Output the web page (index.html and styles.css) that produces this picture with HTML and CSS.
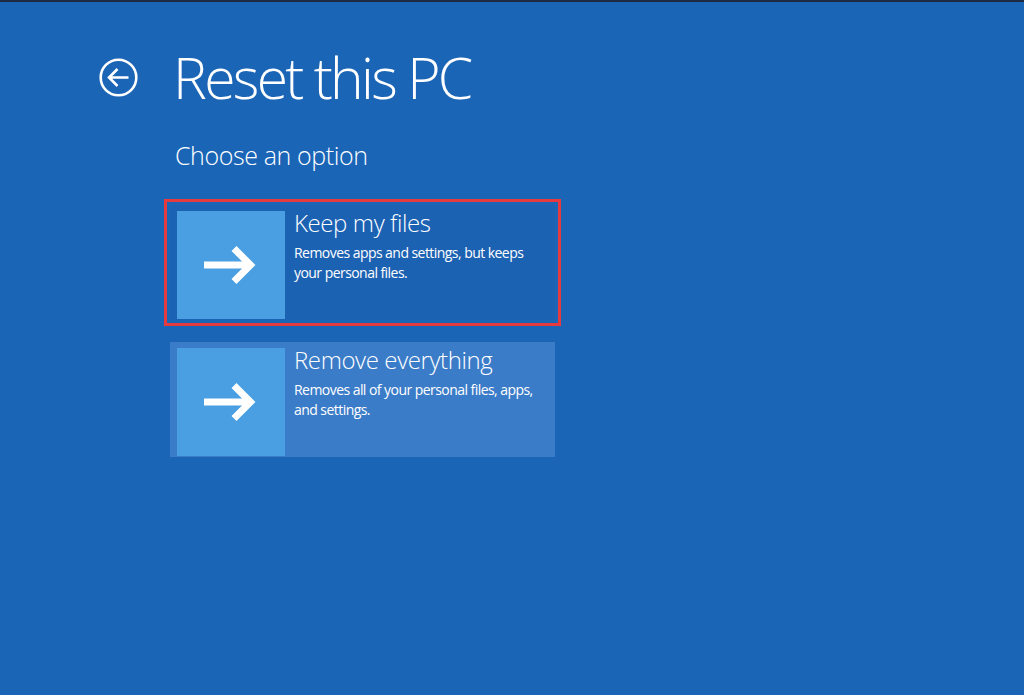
FILE: index.html
```html
<!DOCTYPE html>
<html lang="en">
<head>
    <meta charset="UTF-8">
    <meta name="viewport" content="width=device-width, initial-scale=1.0">
    <title>Reset this PC</title>
    <link rel="stylesheet" href="styles.css">
</head>
<body>
    <div class="screen">
        <div class="header">
            <button class="back" aria-label="Back">
                <svg width="39" height="39" viewBox="0 0 39 39">
                    <circle cx="19.5" cy="19.5" r="17.8" fill="none" stroke="#fff" stroke-width="2.6"/>
                    <path d="M10 19.5 H29.5 M18.5 11 L10 19.5 L18.5 28" fill="none" stroke="#fff" stroke-width="2.6" stroke-linejoin="miter"/>
                </svg>
            </button>
            <h1>Reset this PC</h1>
        </div>
        <h2 class="subtitle">Choose an option</h2>

        <div class="options">
            <div class="option selected">
                <div class="tile">
                    <svg width="52" height="40" viewBox="0 0 52 40">
                        <path d="M0 20 H46 M30 3.5 L46.5 20 L30 36.5" fill="none" stroke="#fff" stroke-width="7"/>
                    </svg>
                </div>
                <div class="text">
                    <div class="name">Keep my files</div>
                    <p class="desc">Removes apps and settings, but keeps your personal files.</p>
                </div>
            </div>
            <div class="option hover">
                <div class="tile">
                    <svg width="52" height="40" viewBox="0 0 52 40">
                        <path d="M0 20 H46 M30 3.5 L46.5 20 L30 36.5" fill="none" stroke="#fff" stroke-width="7"/>
                    </svg>
                </div>
                <div class="text">
                    <div class="name">Remove everything</div>
                    <p class="desc">Removes all of your personal files, apps, and settings.</p>
                </div>
            </div>
        </div>
    </div>
</body>
</html>
```

FILE: styles.css
```css
html, body {
    height: 100%;
}
body {
    margin: 0;
    background: #1b65b7;
    border-top: 2px solid #1b2a45;
    box-sizing: border-box;
    color: #ffffff;
    font-family: 'Open Sans', 'Noto Sans', sans-serif;
    overflow: hidden;
}
.header {
    display: flex;
    align-items: center;
    padding: 45px 0 0 99px;
}
.back {
    width: 39px;
    height: 39px;
    padding: 0;
    margin-right: 35px;
    border: none;
    background: none;
    display: flex;
}
h1 {
    margin: 0;
    font-size: 57px;
    line-height: 60px;
    font-weight: 300;
    letter-spacing: -2.7px;
}
.subtitle {
    margin: 36px 0 0 175px;
    font-size: 25px;
    line-height: 25px;
    font-weight: 300;
    letter-spacing: -0.4px;
}
.options {
    margin: 37px 0 0 170px;
    display: flex;
    flex-direction: column;
    gap: 22px;
}
.option {
    width: 385px;
    height: 115px;
    box-sizing: border-box;
    padding: 6px 7px;
    display: flex;
}
.option.selected {
    background: #1c62b3;
    outline: 3px solid #e63a3e;
    outline-offset: 3px;
}
.option.hover {
    background: #3b7cc8;
}
.tile {
    width: 108px;
    height: 108px;
    flex: none;
    background: #4a9fe2;
    display: flex;
    align-items: center;
    justify-content: center;
}
.tile svg {
    margin-left: -2px;
}
.text {
    margin-left: 9px;
}
.name {
    font-size: 24px;
    line-height: 24px;
    font-weight: 300;
    letter-spacing: -0.4px;
}
.desc {
    margin: 8px 0 0;
    font-size: 14px;
    line-height: 20px;
    letter-spacing: -0.55px;
    max-width: 250px;
}
```
